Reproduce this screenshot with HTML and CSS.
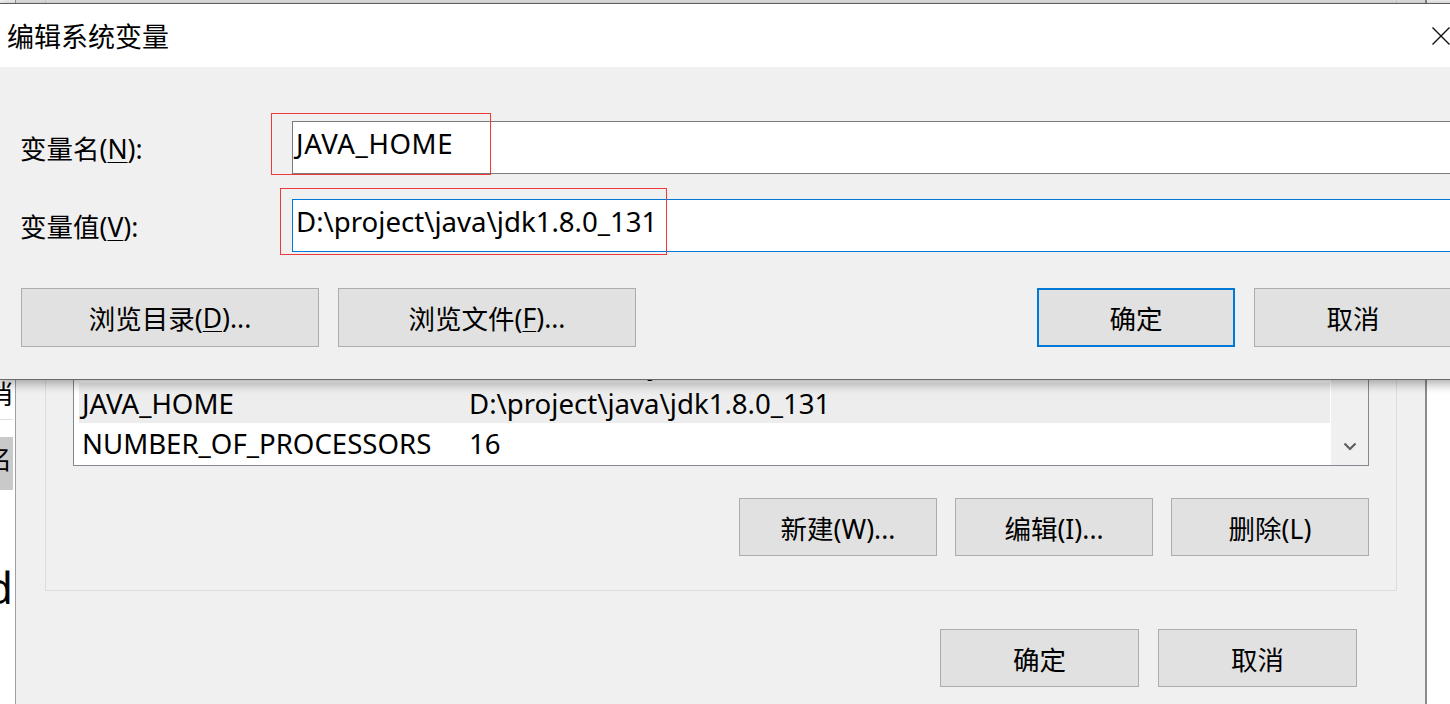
FILE: index.html
```html
<!DOCTYPE html>
<html lang="zh-CN">
<head>
<meta charset="utf-8">
<title>编辑系统变量</title>
<link rel="stylesheet" href="styles.css">
</head>
<body>
<div class="desk">
  <div class="far">
    <div class="far-inner">
      <div class="far-frag">取消</div>
      <div class="far-sep"></div>
      <div class="far-btn">命名</div>
      <div class="far-d">d</div>
    </div>
  </div>

  <div class="env">
    <div class="grp">
      <div class="list">
        <div class="rows">
          <div class="row"><span class="c1">ComSpec</span><span class="c2">C:\WINDOWS\system32\cmd.exe</span></div>
          <div class="row"><span class="c1">DriverData</span><span class="c2">C:\Windows\System32\Drivers\DriverData</span></div>
          <div class="row sel"><span class="c1">JAVA_HOME</span><span class="c2">D:\project\java\jdk1.8.0_131</span></div>
          <div class="row"><span class="c1">NUMBER_OF_PROCESSORS</span><span class="c2">16</span></div>
        </div>
        <div class="scroll">
          <div class="arrow">
            <svg class="chev" viewBox="0 0 14 9" width="14" height="9"><polyline points="1.5,1.5 7,7 12.5,1.5" fill="none" stroke="#5f5f5f" stroke-width="2.2"/></svg>
          </div>
        </div>
      </div>
      <div class="lbtns">
        <div class="btn">新建(W)...</div>
        <div class="btn">编辑(I)...</div>
        <div class="btn">删除(L)</div>
      </div>
    </div>
    <div class="foot">
      <div class="btn fbtn">确定</div>
      <div class="btn fbtn">取消</div>
    </div>
  </div>

  <div class="dialog">
    <div class="titlebar">
      <span class="title">编辑系统变量</span>
      <svg class="close" viewBox="0 0 18 18" width="18" height="18"><path d="M0.5 0.5 L17.5 17.5 M17.5 0.5 L0.5 17.5" stroke="#111" stroke-width="1.4" fill="none"/></svg>
    </div>
    <div class="dbody">
      <div class="field">
        <div class="label">变量名(<u>N</u>):</div>
        <div class="input"><span class="val v1">JAVA_HOME</span></div>
      </div>
      <div class="field">
        <div class="label">变量值(<u>V</u>):</div>
        <div class="input focus"><span class="val">D:\project\java\jdk1.8.0_131</span></div>
      </div>
      <div class="dbtns">
        <div class="bgroup">
          <div class="btn wide">浏览目录(<u>D</u>)...</div>
          <div class="btn wide">浏览文件(<u>F</u>)...</div>
        </div>
        <div class="bgroup">
          <div class="btn def">确定</div>
          <div class="btn">取消</div>
        </div>
      </div>
    </div>
    <div class="mark m1"></div>
    <div class="mark m2"></div>
  </div>
</div>
</body>
</html>
```

FILE: styles.css
```css
* { box-sizing: border-box; margin: 0; padding: 0; }
html, body { width: 1450px; height: 704px; overflow: hidden; background: #fff; }
body {
  font-family: "Noto Sans", "Noto Sans CJK SC", sans-serif;
  font-size: 26.5px;
  color: #000;
}
u { text-decoration-thickness: 1px; text-underline-offset: 3px; }

.desk { position: relative; width: 1450px; height: 704px; overflow: hidden; background: #fff; }

/* far back window sliver */
.far { position: absolute; left: 0; top: 0; width: 15px; height: 704px; overflow: hidden; background: #fff; }
.far-inner { width: 200px; margin-left: -187px; display: flex; flex-direction: column; }
.far-frag { margin-top: 374px; height: 40px; line-height: 40px; text-align: right; white-space: nowrap; }
.far-sep { margin-top: 5px; height: 1px; background: #dedede; }
.far-btn { margin-top: 17px; height: 53px; line-height: 44px; background: #c9c9c9; text-align: right; white-space: nowrap; padding-right: 1px; }
.far-d { margin-top: 72px; height: 50px; line-height: 50px; font-size: 44px; text-align: right; font-family: "Noto Sans", sans-serif; }

/* environment variables window (behind) */
.env {
  position: absolute; left: 15px; top: -20px; width: 1412px; height: 724px;
  background: #f0f0f0;
  border-left: 1px solid #a0a0a0;
  border-right: 2px solid #8c8c8c;
  padding: 0 28px 0 29px;
}
.grp { border: 1px solid #dcdcdc; padding: 27px 27px 34px 27px; }
.list { height: 458px; border: 1px solid #828790; background: #fff; display: flex; }
.rows { flex: 1; display: flex; flex-direction: column; justify-content: flex-end; overflow: hidden; padding-bottom: 2px; }
.row { height: 40px; margin-left: 5px; display: flex; align-items: center; padding-left: 3px; white-space: nowrap; font-size: 27.6px; }
.row.sel { background: #ededed; }
.c1 { width: 387px; }
.scroll { width: 38px; background: #f0f0f0; border-left: 1px solid #fff; display: flex; flex-direction: column; justify-content: flex-end; }
.arrow { height: 38px; display: flex; align-items: center; justify-content: center; }
.lbtns { display: flex; justify-content: flex-end; gap: 18px; margin-top: 32px; }
.foot { display: flex; justify-content: flex-end; gap: 19px; margin-top: 38px; padding-right: 40px; }

.btn {
  height: 58px; width: 198px;
  background: #e1e1e1; border: 1px solid #adadad;
  display: flex; align-items: center; justify-content: center;
  white-space: nowrap;
}
.fbtn { width: 199px; }

/* front dialog */
.dialog {
  position: absolute; left: 0; top: 3px; width: 1500px;
  background: #f0f0f0;
  border-top: 1px solid #5c5c5c;
  border-bottom: 1px solid #6a6a6a;
  box-shadow: 0 2px 10px 2px rgba(0, 0, 0, 0.32);
}
.titlebar {
  height: 63px; background: #fff;
  display: flex; align-items: center; justify-content: space-between;
  padding: 0 50px 0 7px;
}
.title { font-size: 27px; }
.close { display: block; }
.dbody { padding: 54px 48px 32px 20px; }
.field { display: flex; align-items: center; }
.field + .field { margin-top: 25px; }
.label { width: 272px; white-space: nowrap; }
.input {
  flex: 1; margin-right: -80px; height: 53px;
  border: 1px solid #7a7a7a; background: #fff;
  padding: 0 0 9px 3px;
  display: flex; align-items: center; white-space: nowrap;
}
.val { font-size: 27.6px; }
.v1 { letter-spacing: 0.6px; }
.input.focus { border-color: #0078d7; }
.dbtns { display: flex; justify-content: space-between; margin-top: 36px; padding-left: 1px; }
.bgroup { display: flex; gap: 19px; }
.dbtns .btn { height: 59px; }
.btn.wide { width: 298px; }
.btn.def { border: 2px solid #0078d7; }

.mark { position: absolute; border: 1px solid #ec3a3a; }
.m1 { left: 271px; top: 109px; width: 220px; height: 62px; }
.m2 { left: 280px; top: 184px; width: 387px; height: 67px; }
```
